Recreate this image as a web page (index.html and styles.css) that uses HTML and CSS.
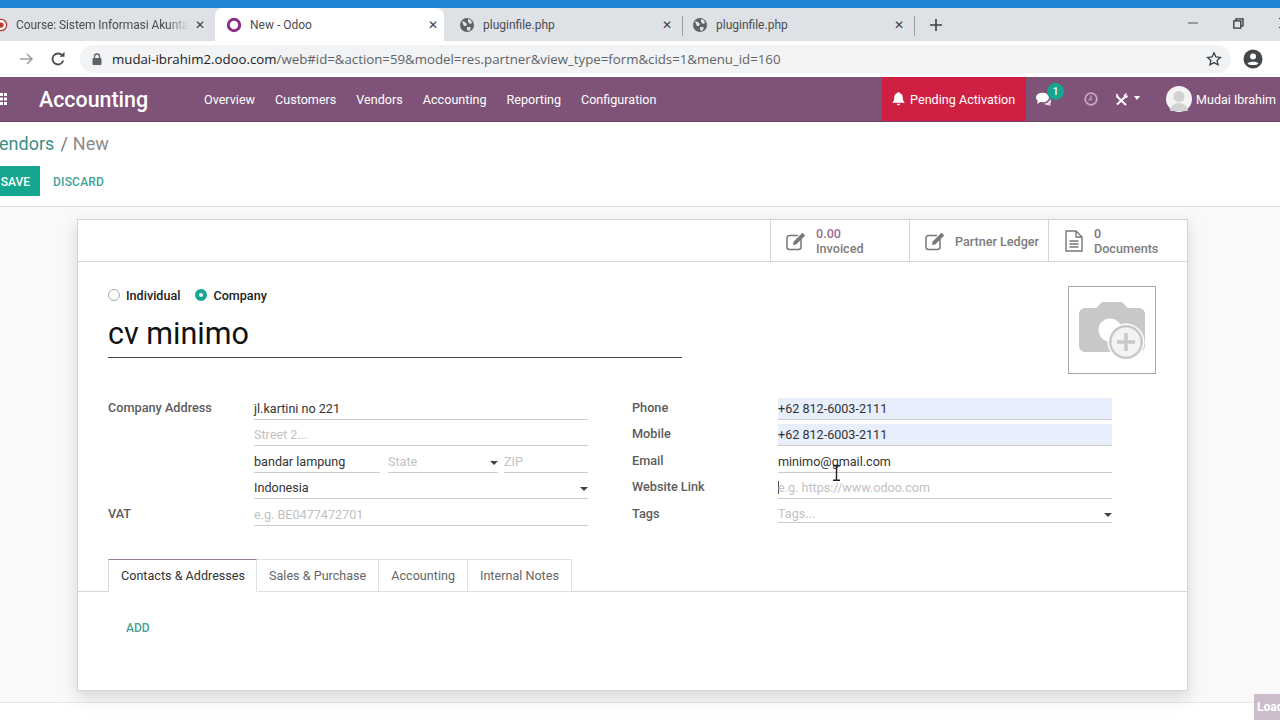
FILE: index.html
```html
<!DOCTYPE html>
<html lang="en">
<head>
  <meta charset="UTF-8" />
  <title>New - Odoo</title>
  <link rel="stylesheet" href="styles.css">
</head>
<body>
  <!-- Browser chrome -->
  <div class="stripe"></div>
  <div class="tabstrip">
    <div class="tab tab-first">
      <svg class="favicon" width="14" height="16" viewBox="0 0 16 16"><circle cx="8" cy="8" r="6.5" fill="#fff" stroke="#c0392b" stroke-width="1.5"/><circle cx="8" cy="8" r="3" fill="#c0392b"/></svg>
      <span class="tab-title fade">Course: Sistem Informasi Akuntansi</span>
      <span class="tab-x">✕</span>
    </div>
    <div class="tab tab-active">
      <svg class="favicon" width="16" height="16" viewBox="0 0 16 16"><circle cx="8" cy="8" r="5.7" fill="none" stroke="#8a2f83" stroke-width="3"/></svg>
      <span class="tab-title">New - Odoo</span>
      <span class="tab-x">✕</span>
    </div>
    <div class="tab tab-third">
      <svg class="favicon" width="16" height="16" viewBox="0 0 16 16"><circle cx="8" cy="8" r="7" fill="#5f6368"/><path d="M3 4l3 1 2 2-1 2-2 0-1-2zM9 2l3 1 1 3-2 1-2-2zM8 10l3 0 1 1-2 3-2-1z" fill="#dee1e6"/></svg>
      <span class="tab-title">pluginfile.php</span>
      <span class="tab-x">✕</span>
    </div>
    <div class="tab tab-sep">
      <svg class="favicon" width="16" height="16" viewBox="0 0 16 16"><circle cx="8" cy="8" r="7" fill="#5f6368"/><path d="M3 4l3 1 2 2-1 2-2 0-1-2zM9 2l3 1 1 3-2 1-2-2zM8 10l3 0 1 1-2 3-2-1z" fill="#dee1e6"/></svg>
      <span class="tab-title">pluginfile.php</span>
      <span class="tab-x">✕</span>
    </div>
    <div class="new-tab">
      <svg width="12" height="12" viewBox="0 0 12 12"><path d="M6 0v12M0 6h12" stroke="#3c4043" stroke-width="1.6"/></svg>
    </div>
    <div class="win-controls">
      <svg width="10" height="10" viewBox="0 0 10 10"><path d="M0 5h10" stroke="#555" stroke-width="1"/></svg>
      <svg width="11" height="11" viewBox="0 0 11 11"><path d="M3 2.5V.8h7v7H8.300M.8 2.800h7v7.400h-7z" fill="none" stroke="#333" stroke-width="1.300"/></svg>
      <svg width="10" height="10" viewBox="0 0 10 10"><path d="M0 0l10 10M10 0L0 10" stroke="#333" stroke-width="1"/></svg>
    </div>
  </div>
  <div class="toolbar">
    <svg class="nav-back" width="16" height="16" viewBox="0 0 16 16"><path d="M14 8H2M7 3L2 8l5 5" fill="none" stroke="#5f6368" stroke-width="1.600"/></svg>
    <svg class="nav-fwd" width="16" height="16" viewBox="0 0 16 16"><path d="M2 8h12M9 3l5 5-5 5" fill="none" stroke="#9aa0a6" stroke-width="1.600"/></svg>
    <svg class="nav-reload" width="16" height="16" viewBox="0 0 16 16"><path d="M13.300 9.500A5.500 5.500 0 1 1 12 4.200" fill="none" stroke="#4a4d51" stroke-width="1.800"/><path d="M9.500 5.800h5v-5z" fill="#4a4d51"/></svg>
    <div class="omnibox">
      <svg width="10" height="12" viewBox="0 0 10 12"><rect x="0.500" y="5" width="9" height="7" rx="1" fill="#5f6368"/><path d="M2.500 5V3.500a2.500 2.500 0 0 1 5 0V5" fill="none" stroke="#5f6368" stroke-width="1.300"/></svg>
      <span class="url"><span class="url-host">mudai-ibrahim2.odoo.com</span>/web#id=&amp;action=59&amp;model=res.partner&amp;view_type=form&amp;cids=1&amp;menu_id=160</span>
      <svg class="star" width="16" height="16" viewBox="0 0 16 16"><path d="M8 1.800l1.900 4.100 4.500.5-3.300 3 .9 4.400L8 11.600l-4 2.200.9-4.400-3.300-3 4.500-.5z" fill="none" stroke="#3c4043" stroke-width="1.300"/></svg>
    </div>
    <svg class="profile" width="20" height="20" viewBox="0 0 20 20"><circle cx="10" cy="10" r="9.500" fill="#44474a"/><circle cx="10" cy="7.500" r="3" fill="#fff"/><path d="M4.500 14.500c1.500-2.500 9.500-2.500 11 0-1.500 2-9.500 2-11 0z" fill="#fff"/></svg>
  </div>

  <!-- Odoo navbar -->
  <nav class="navbar">
    <svg class="apps" width="8" height="14" viewBox="0 0 8 14"><path d="M0 1h3v3H0zM4 1h3v3H4zM0 5.500h3v3H0zM4 5.500h3v3H4zM0 10h3v3H0zM4 10h3v3H4z" fill="#fff"/></svg>
    <span class="brand">Accounting</span>
    <ul class="menu">
      <li>Overview</li>
      <li>Customers</li>
      <li>Vendors</li>
      <li>Accounting</li>
      <li>Reporting</li>
      <li>Configuration</li>
    </ul>
    <div class="systray">
      <div class="pending">
        <svg width="13" height="14" viewBox="0 0 12 13"><path d="M6 0a1 1 0 0 1 1 1c2.300.5 3 2.500 3 4.500 0 2 .6 3 2 4.500H0c1.400-1.500 2-2.500 2-4.500S2.700 1.500 5 1a1 1 0 0 1 1-1zM4.500 11h3a1.500 1.500 0 0 1-3 0z" fill="#fff"/></svg>
        Pending Activation
      </div>
      <div class="chat">
        <svg width="16" height="14" viewBox="0 0 16 14"><ellipse cx="6.500" cy="5.500" rx="6.500" ry="4.800" fill="#fff"/><path d="M2 8l-1 4 4-2.500z" fill="#fff"/><path d="M14 7c1.500 1.500 1.500 3.500 0 5l1 2-3-1c-1.500 0-3-.3-4-1.500 3 0 5.500-2 6-4.500z" fill="#e8dbe6"/></svg>
        <span class="chat-badge">1</span>
      </div>
      <svg class="clock" width="14" height="14" viewBox="0 0 14 14"><circle cx="7" cy="7" r="5.800" fill="none" stroke="#c4a6bf" stroke-width="1.800"/><path d="M7 3.500V7.500H4.500" fill="none" stroke="#c4a6bf" stroke-width="1.300"/></svg>
      <svg class="tools" width="13" height="13" viewBox="0 0 13 13"><path d="M1.500 3l9.500 9M11.500 2.500L2 11.500" stroke="#fff" stroke-width="2"/><path d="M8.500 2.500L11 0l1 .5-1.200 1.700 1 1L13 2l.5 1-2.500 2.500z M.5.500L3 1.500 3.500 4 2 3.500z" fill="#fff"/></svg>
      <span class="caret caret-light"></span>
      <div class="avatar">
        <svg width="26" height="26" viewBox="0 0 26 26"><circle cx="13" cy="13" r="13" fill="#f4f4f4"/><circle cx="13" cy="10.500" r="5.500" fill="#d2d2d2"/><path d="M4 25c1-6 5-8 9-8s8 2 9 8z" fill="#d2d2d2"/></svg>
      </div>
      <span class="user-name">Mudai Ibrahim</span>
    </div>
  </nav>

  <!-- Control panel -->
  <header class="control-panel">
    <div class="breadcrumb"><span class="crumb-link">Vendors</span><span class="crumb-sep">/</span><span class="crumb-now">New</span></div>
    <div class="actions">
      <button class="btn-save">SAVE</button>
      <button class="btn-link">DISCARD</button>
    </div>
  </header>

  <!-- Form -->
  <main class="content">
    <section class="sheet">
      <div class="button-box">
        <div class="stat">
          <svg width="24" height="22" viewBox="0 0 24 22"><path d="M16 9v8a2.500 2.500 0 0 1-2.500 2.500h-9A2.500 2.500 0 0 1 2 17V8a2.500 2.500 0 0 1 2.500-2.500H13" fill="none" stroke="#777" stroke-width="1.500"/><path d="M8 15l.7-3.400L17.500 2.800l2.700 2.700-8.800 8.800z" fill="#777"/></svg>
          <div class="stat-text"><span class="stat-value">0.00</span><span>Invoiced</span></div>
        </div>
        <div class="stat">
          <svg width="24" height="22" viewBox="0 0 24 22"><path d="M16 9v8a2.500 2.500 0 0 1-2.500 2.500h-9A2.500 2.500 0 0 1 2 17V8a2.500 2.500 0 0 1 2.500-2.500H13" fill="none" stroke="#777" stroke-width="1.500"/><path d="M8 15l.7-3.400L17.500 2.800l2.700 2.700-8.800 8.800z" fill="#777"/></svg>
          <div class="stat-text"><span>Partner Ledger</span></div>
        </div>
        <div class="stat stat-docs">
          <svg width="20" height="22" viewBox="0 0 20 22"><path d="M2 1h10l6 6v14H2z M12 1v6h6" fill="none" stroke="#777" stroke-width="1.400"/><path d="M5.500 11h9M5.500 14h9M5.500 17h9" stroke="#777" stroke-width="1.300"/></svg>
          <div class="stat-text"><span class="stat-value stat-plain">0</span><span>Documents</span></div>
        </div>
      </div>

      <div class="sheet-body">
        <div class="head">
          <div class="head-main">
            <div class="radios">
              <span class="radio"></span><label>Individual</label>
              <span class="radio radio-on"></span><label>Company</label>
            </div>
            <div class="partner-name">cv minimo</div>
          </div>
          <div class="image-box">
            <svg width="68" height="60" viewBox="0 0 68 60"><path d="M7 8h11l6-6h20l6 6h11a6 6 0 0 1 6 6v32a6 6 0 0 1-6 6H7a6 6 0 0 1-6-6V14a6 6 0 0 1 6-6z" fill="#c8c8c8"/><circle cx="32" cy="30" r="11.500" fill="#fff"/><circle cx="48" cy="42" r="18.500" fill="#fff"/><circle cx="48" cy="42" r="17" fill="#c8c8c8"/><circle cx="48" cy="42" r="14.500" fill="#f3f3f3"/><path d="M48 33v18M39 42h18" stroke="#c8c8c8" stroke-width="3.500"/></svg>
          </div>
        </div>

        <div class="fields">
          <div class="field-grid">
            <div class="lbl">Company Address</div>
            <div class="val">jl.kartini no 221</div>
            <div class="val ph val-span">Street 2...</div>
            <div class="city-row val-span">
              <div class="val city">bandar lampung</div>
              <div class="val ph state">State<span class="caret"></span></div>
              <div class="val ph zip">ZIP</div>
            </div>
            <div class="val val-span val-select">Indonesia<span class="caret"></span></div>
            <div class="lbl">VAT</div>
            <div class="val ph">e.g. BE0477472701</div>
          </div>
          <div class="field-grid">
            <div class="lbl">Phone</div>
            <div class="val autofill">+62 812-6003-2111</div>
            <div class="lbl">Mobile</div>
            <div class="val autofill">+62 812-6003-2111</div>
            <div class="lbl">Email</div>
            <div class="val">minimo@gmail.com</div>
            <div class="lbl">Website Link</div>
            <div class="val ph val-focus"><span class="text-caret"></span>e.g. https://www.odoo.com</div>
            <div class="lbl">Tags</div>
            <div class="val ph val-select val-tags">Tags...<span class="caret"></span></div>
          </div>
        </div>

        <div class="tabs">
          <div class="nb-tab nb-active">Contacts &amp; Addresses</div>
          <div class="nb-tab">Sales &amp; Purchase</div>
          <div class="nb-tab">Accounting</div>
          <div class="nb-tab">Internal Notes</div>
        </div>
        <div class="tab-pane"><a class="add-link">ADD</a></div>
      </div>
    </section>
  </main>
  <div class="page-end"></div>

  <svg class="ibeam" width="9" height="16" viewBox="0 0 9 16"><path d="M1 .7h7M1 15.300h7M4.500 1v14" stroke="#222" stroke-width="1.400"/></svg>
  <div class="loading">Loading</div>
</body>
</html>
```

FILE: styles.css
```css
:root {
  --purple: #7e5377;
  --teal: #14a68e;
  --teal-text: #3fa39a;
  --line: #d6d6d6;
  --label: #5c5c5c;
  --placeholder: #c2c2c2;
}

html, body {
  height: 720px;
}

body {
  margin: 0;
  width: 1280px;
  overflow: hidden;
  position: relative;
  background: #fff;
  font-family: Roboto, Arial, sans-serif;
  font-size: 13px;
  color: #333;
}

/* browser chrome */
.stripe {
  height: 8px;
  background: #1f87d6;
}

.tabstrip {
  height: 33px;
  background: #dee1e6;
  display: flex;
  align-items: flex-end;
  font-family: Roboto, Arial, sans-serif;
  font-size: 12px;
  color: #4a4d51;
}

.tab {
  width: 233px;
  height: 33px;
  box-sizing: border-box;
  flex: none;
  display: flex;
  align-items: center;
  padding: 0 9px 0 10px;
}

.tab-first {
  width: 231px;
  margin-left: -16px;
  padding-right: 9px;
}

.tab-active {
  width: 229px;
  background: #fff;
  border-radius: 8px 8px 0 0;
  padding-left: 11px;
  padding-right: 5px;
}

.tab-third {
  width: 238px;
  padding-left: 15px;
  padding-right: 9px;
}

.tab-sep {
  width: 233px;
  position: relative;
  padding-left: 10px;
  padding-right: 10px;
}

.tab-sep::before,
.tab-sep::after {
  content: "";
  position: absolute;
  top: 8px;
  height: 20px;
  width: 1px;
  background: #9aa0a6;
}

.tab-sep::before { left: 0; }
.tab-sep::after { right: 0; }

.favicon {
  flex: none;
  margin-right: 8px;
}

.tab-title {
  flex: 1;
  white-space: nowrap;
  overflow: hidden;
}

.fade {
  letter-spacing: -0.1px;
  -webkit-mask-image: linear-gradient(90deg, #000 88%, transparent);
  mask-image: linear-gradient(90deg, #000 88%, transparent);
}

.tab-x {
  flex: none;
  width: 12px;
  margin-left: 6px;
  font-family: "DejaVu Sans", sans-serif;
  font-size: 12px;
  color: #3c4043;
  text-align: center;
}

.new-tab {
  height: 33px;
  display: flex;
  align-items: center;
  margin-left: 15px;
}

.win-controls {
  margin-left: auto;
  height: 33px;
  display: flex;
  align-items: center;
  gap: 35px;
  margin-right: -21px;
  padding-bottom: 3px;
  box-sizing: border-box;
  width: 113px;
  flex: none;
}

.toolbar {
  height: 36px;
  display: flex;
  align-items: center;
  background: #fff;
  box-sizing: border-box;
  padding-bottom: 1px;
}

.nav-back {
  margin-left: -14px;
  flex: none;
}

.nav-fwd {
  margin-left: 16px;
  flex: none;
}

.nav-reload {
  margin-left: 16px;
  flex: none;
}

.omnibox {
  margin-left: 14px;
  width: 1151px;
  height: 28px;
  flex: none;
  box-sizing: border-box;
  background: #f1f3f4;
  border-radius: 14px;
  display: flex;
  align-items: center;
  padding: 0 9px 0 12px;
}

.url {
  margin-left: 10px;
  font-family: "Open Sans", Arial, sans-serif;
  font-size: 13.250px;
  color: #5f6368;
  white-space: nowrap;
}

.url-host {
  color: #202124;
}

.star {
  margin-left: auto;
}

.profile {
  margin-left: 12px;
  flex: none;
}

/* navbar */
.navbar {
  height: 45px;
  background: var(--purple);
  border-bottom: 1px solid #6a4565;
  box-sizing: border-box;
  display: flex;
  align-items: center;
  color: #fff;
}

.apps {
  flex: none;
  margin-left: 0;
}

.brand {
  margin-left: 31px;
  font-size: 21.400px;
  font-weight: 500;
  width: 165px;
  flex: none;
}

.menu {
  list-style: none;
  margin: 0;
  padding: 0;
  display: flex;
  gap: 20px;
  font-size: 12.600px;
}

.systray {
  margin-left: auto;
  height: 44px;
  display: flex;
  align-items: center;
  padding-right: 4px;
}

.pending {
  width: 144px;
  height: 44px;
  box-sizing: border-box;
  background: #cf1f42;
  display: flex;
  align-items: center;
  gap: 5px;
  padding-left: 10px;
  font-size: 12.600px;
}

.chat {
  position: relative;
  margin-left: 10px;
  display: flex;
}

.chat-badge {
  position: absolute;
  left: 11px;
  top: -9px;
  width: 17px;
  height: 17px;
  border-radius: 50%;
  background: var(--teal);
  font-size: 10px;
  font-weight: 500;
  line-height: 17px;
  text-align: center;
}

.clock {
  margin-left: 32px;
  flex: none;
}

.tools {
  margin-left: 17px;
  flex: none;
}

.caret {
  display: inline-block;
  border-left: 4px solid transparent;
  border-right: 4px solid transparent;
  border-top: 4px solid #444;
}

.caret-light {
  border-top-color: #fff;
  border-left-width: 3.500px;
  border-right-width: 3.500px;
  margin-left: 6px;
  margin-bottom: 3px;
}

.avatar {
  margin-left: 26px;
  width: 26px;
  height: 26px;
  flex: none;
  display: flex;
}

.user-name {
  margin-left: 4px;
  font-size: 12.500px;
  white-space: nowrap;
}

/* control panel */
.control-panel {
  height: 85px;
  box-sizing: border-box;
  background: #fff;
  border-bottom: 1px solid #d9d9d9;
  padding-top: 11px;
}

.breadcrumb {
  margin-left: -12px;
  height: 22px;
  line-height: 22px;
  font-size: 18px;
  display: flex;
}

.crumb-link {
  color: #3c8f86;
}

.crumb-sep {
  margin: 0 5px 0 6px;
  color: #777;
}

.crumb-now {
  color: #8a8a8a;
}

.actions {
  margin-top: 11px;
  display: flex;
  align-items: center;
}

.actions button {
  font-family: Roboto, Arial, sans-serif;
  font-size: 12px;
  font-weight: 500;
  border: none;
  cursor: pointer;
  padding-top: 1px;
}

.btn-save {
  width: 40px;
  height: 30px;
  padding: 0 10px 0 0;
  background: var(--teal);
  color: #fff;
  text-align: right;
}

.btn-link {
  margin-left: 13px;
  padding: 0;
  background: none;
  color: var(--teal-text);
  letter-spacing: 0.2px;
}

/* form sheet */
.content {
  height: 496px;
  box-sizing: border-box;
  background: #f9f9f9;
  padding: 12px 0 0 77px;
  border-bottom: 1px solid #e4e4e4;
}

.sheet {
  width: 1111px;
  height: 472px;
  box-sizing: border-box;
  background: #fff;
  border: 1px solid #d4d4d4;
  box-shadow: 0 6px 16px rgba(0, 0, 0, 0.14);
}

.button-box {
  height: 42px;
  box-sizing: border-box;
  border-bottom: 1px solid var(--line);
  display: flex;
  justify-content: flex-end;
}

.stat {
  width: 139px;
  box-sizing: border-box;
  border-left: 1px solid var(--line);
  display: flex;
  align-items: center;
  gap: 7px;
  padding-left: 14px;
  color: #7d7d7d;
  font-size: 12.600px;
  line-height: 15px;
}

.stat-docs {
  padding-left: 15px;
  gap: 10px;
}

.stat-text {
  display: flex;
  flex-direction: column;
  font-weight: 500;
  padding-top: 1px;
}

.stat-value {
  color: #9a6c92;
}

.stat-plain {
  color: #8a6a86;
}

.sheet-body {
  padding-top: 24px;
}

.head {
  display: flex;
  justify-content: space-between;
  padding: 0 31px 0 30px;
  height: 103px;
}

.head-main {
  width: 574px;
}

.radios {
  display: flex;
  align-items: center;
  height: 18px;
  font-size: 12.600px;
  font-weight: 500;
  color: #222;
}

.radios label {
  margin: 0 15px 0 6px;
}

.radio {
  width: 10px;
  height: 10px;
  border: 1px solid #aaa;
  border-radius: 50%;
}

.radio-on {
  width: 4px;
  height: 4px;
  border: 4px solid var(--teal);
}

.partner-name {
  margin-top: 11px;
  height: 42px;
  border-bottom: 1.500px solid #444;
  font-size: 30.500px;
  line-height: 38px;
  color: #111;
}

.image-box {
  width: 88px;
  height: 88px;
  box-sizing: border-box;
  border: 1px solid #a8a8a8;
  display: flex;
  align-items: center;
  justify-content: center;
}

.fields {
  padding: 8px 75px 0 30px;
  display: flex;
  gap: 44px;
}

.field-grid {
  width: 480px;
  display: grid;
  grid-template-columns: 146px 334px;
  grid-auto-rows: 26.400px;
}

.lbl {
  font-weight: 500;
  color: var(--label);
  font-size: 12.700px;
  line-height: 22px;
}

.val {
  height: 22px;
  margin-top: 1px;
  box-sizing: border-box;
  border-bottom: 1px solid #ccc;
  line-height: 22px;
  font-size: 12.600px;
  color: #333;
  white-space: nowrap;
  position: relative;
}

.val-span {
  grid-column: 2;
}

.ph {
  color: var(--placeholder);
}

.autofill {
  background: #e8eefb;
}

.city-row {
  display: flex;
  gap: 8px;
}

.city {
  width: 126px;
}

.state {
  width: 110px;
}

.zip {
  flex: 1;
  margin-left: -2px;
}

.val-select .caret,
.state .caret {
  position: absolute;
  right: 0;
  top: 10px;
}

.val-tags {
  margin-top: 0;
  height: 20px;
  line-height: 21px;
}

.text-caret {
  display: inline-block;
  width: 1px;
  height: 13px;
  margin-right: -1px;
  background: #555;
  vertical-align: -2px;
}

/* notebook */
.tabs {
  margin-top: 30px;
  padding-left: 30px;
  display: flex;
  height: 33px;
  box-sizing: border-box;
  border-bottom: 1px solid var(--line);
}

.nb-tab {
  height: 33px;
  box-sizing: border-box;
  padding: 0 12px;
  border: 1px solid #e0e0e0;
  border-left: none;
  line-height: 31px;
  font-size: 12.600px;
  color: #666;
}

.nb-active {
  padding-right: 11px;
  border-left: 1px solid var(--line);
  border-top: 1px solid #9b7a96;
  border-bottom: 1px solid #fff;
  color: #333;
}

.tab-pane {
  padding: 28px 0 0 48px;
}

.add-link {
  font-weight: 500;
  font-size: 12px;
  line-height: 16px;
  color: var(--teal-text);
}

/* things drawn over the page */
.ibeam {
  position: absolute;
  left: 832px;
  top: 465px;
}

.loading {
  position: absolute;
  left: 1254px;
  top: 694px;
  width: 26px;
  height: 26px;
  overflow: hidden;
  background: #cdbdcc;
  color: #fff;
  font-size: 12px;
  font-weight: 700;
  line-height: 26px;
  padding-left: 3px;
  box-sizing: border-box;
  white-space: nowrap;
}
```
